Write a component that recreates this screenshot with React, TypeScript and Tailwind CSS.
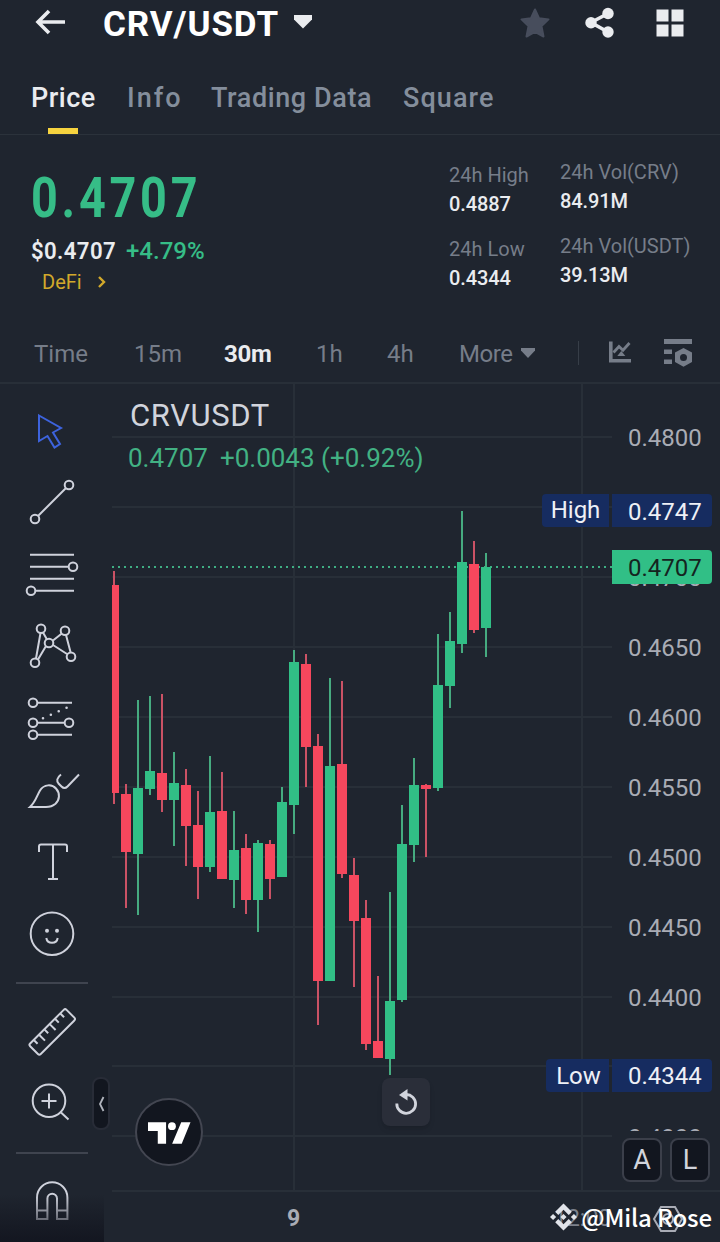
import type { ReactNode } from "react";

type Candle = [high: number, low: number, top: number, bottom: number, up: boolean];

const CANDLES: Candle[] = [
  [571, 804, 585, 793, false],
  [784, 908, 794, 852, false],
  [700, 915, 788, 854, true],
  [696, 795, 771, 789, true],
  [694, 812, 773, 800, false],
  [752, 846, 783, 800, true],
  [769, 866, 785, 826, false],
  [791, 899, 825, 867, false],
  [756, 872, 812, 867, true],
  [772, 879, 811, 879, false],
  [811, 908, 850, 880, true],
  [834, 914, 848, 900, false],
  [840, 932, 843, 900, true],
  [840, 899, 844, 879, false],
  [787, 877, 802, 877, true],
  [650, 834, 662, 805, true],
  [654, 787, 664, 747, false],
  [734, 1025, 746, 981, false],
  [678, 981, 766, 981, true],
  [681, 878, 764, 874, false],
  [858, 987, 875, 921, false],
  [900, 1050, 918, 1044, false],
  [976, 1058, 1041, 1058, false],
  [892, 1075, 1001, 1059, true],
  [805, 1002, 844, 1000, true],
  [758, 862, 785, 845, true],
  [784, 857, 785, 789, false],
  [634, 791, 685, 788, true],
  [612, 708, 641, 686, true],
  [511, 653, 562, 644, true],
  [541, 633, 564, 630, false],
  [553, 657, 567, 628, true],
];

const GRID_Y = [437, 507, 577, 647, 717, 787, 857, 927, 997, 1066, 1136];

// empty steps are the ones fully hidden behind the high / low tags
const AXIS = ["0.4800", "", "0.4700", "0.4650", "0.4600", "0.4550", "0.4500", "0.4450", "0.4400", "", "0.4300"];

function Header() {
  return (
    <header className="flex h-[46px] items-center pr-9 pl-[35px] text-[#eaecef]">
      <svg className="-mt-0.5" width="30" height="26" viewBox="0 0 30 26" fill="none" stroke="currentColor" strokeWidth="3.6">
        <path d="M30 13H3M14 2 3 13l11 11" />
      </svg>
      <h1 className="ml-[38px] w-[190px] pt-[3px] text-[35px] leading-[46px] font-bold tracking-[0.9px] whitespace-nowrap text-white">
        CRV/USDT
      </h1>
      <svg className="-mt-1" width="20" height="16" viewBox="0 0 20 16" fill="currentColor">
        <path d="M1 2h18v4.500L10 15.500 1 6.500z" />
      </svg>
      <div className="-mt-px ml-auto flex items-center">
        <svg width="32" height="32" viewBox="0 0 32 32" fill="#474d5c" stroke="#474d5c" strokeWidth="2" strokeLinejoin="round">
          <path d="m16 2.500 4.100 8.800 9.400 1.100-7 6.700 2 10.400L16 24.800l-8.500 4.700 2-10.400-7-6.700 9.400-1.100z" />
        </svg>
        <svg className="ml-[33px]" width="32" height="32" viewBox="0 0 32 32" fill="currentColor">
          <path d="M24 6.500 7 15.500l17 9.500" fill="none" stroke="currentColor" strokeWidth="3.600" />
          <circle cx="24" cy="6.500" r="5.700" />
          <circle cx="7" cy="15.700" r="5.700" />
          <circle cx="24" cy="25" r="5.700" />
        </svg>
        <svg className="ml-10" width="28" height="28" viewBox="0 0 28 28" fill="currentColor">
          <path d="M.5.500h12v12H.5zM15.500.500h12v12h-12zM.5 15.500h12v12H.5zM15.500 15.500h12v12h-12z" />
        </svg>
      </div>
    </header>
  );
}

function Tabs() {
  return (
    <nav className="flex h-[89px] border-b border-[#2b323b] pl-[31px] text-[27px] leading-[105px] font-medium whitespace-nowrap text-[#848e9c]">
      <div className="relative w-24 tracking-[0.500px] text-[#eaecef]">
        Price
        <span className="absolute bottom-0 left-[17px] h-1.5 w-[30px] bg-[#f6d33f]" />
      </div>
      <div className="w-[84px] tracking-[2px]">Info</div>
      <div className="w-48 tracking-[0.600px]">Trading Data</div>
      <div className="tracking-[1.100px]">Square</div>
    </nav>
  );
}

function Stat({ label, value }: { label: string; value: string }) {
  return (
    <div className="h-[74px] text-[20px] leading-[29px] whitespace-nowrap">
      <div className="text-[#767d89]">{label}</div>
      <div className="font-medium tracking-[-0.100px] text-[#eaecef]">{value}</div>
    </div>
  );
}

function PriceSummary() {
  return (
    <section className="flex h-[188px]">
      <div className="w-[449px] pt-[35px] pl-[31px]">
        <div className="h-14 w-fit origin-left scale-x-[0.835] text-[56px] leading-[56px] font-bold tracking-[4.500px] text-[#36bd87]">
          0.4707
        </div>
        <div className="mt-2.5 flex h-[30px] text-[24px] leading-[30px] whitespace-nowrap">
          <span className="w-[95px] origin-left">
            <span className="block w-fit origin-left scale-x-[0.925] font-semibold tracking-[0.400px] text-[#eaecef]">
              $0.4707
            </span>
          </span>
          <span className="font-medium text-[#36bd87]">+4.79%</span>
        </div>
        <div className="mt-1 flex h-6 items-center pl-[11px] text-[20px] leading-6 text-[#d2a92b]">
          DeFi
          <svg className="ml-[15px]" width="10" height="12" viewBox="0 0 10 12" fill="none" stroke="currentColor" strokeWidth="2.400">
            <path d="m2 1 5 5-5 5" />
          </svg>
        </div>
      </div>
      <div className="w-[111px] pt-[26px]">
        <Stat label="24h High" value="0.4887" />
        <Stat label="24h Low" value="0.4344" />
      </div>
      <div className="pt-[23px]">
        <Stat label="24h Vol(CRV)" value="84.91M" />
        <Stat label="24h Vol(USDT)" value="39.13M" />
      </div>
    </section>
  );
}

function Intervals() {
  return (
    <div className="flex h-[61px] items-center border-b-2 border-[#282f38] pl-[34px] text-[24px] whitespace-nowrap text-[#767d89]">
      <div className="w-[100px] pt-0.5">Time</div>
      <div className="w-[90px] pt-0.5">15m</div>
      <div className="w-[92px] pt-0.5 font-bold tracking-[-0.300px] text-[#eaecef]">30m</div>
      <div className="w-[71px] pt-0.5">1h</div>
      <div className="w-[72px] pt-0.5">4h</div>
      <div className="w-[62px] pt-0.5 tracking-[-0.400px]">More</div>
      <svg width="14" height="10" viewBox="0 0 14 10" fill="currentColor">
        <path d="M0 0h14v2.500L7 10 0 2.500z" />
      </svg>
      <div className="ml-[43px] h-6 w-px bg-[#373e48]" />
      <svg className="-mt-0.5 ml-[29px]" width="24" height="24" viewBox="0 0 24 24" fill="none" stroke="currentColor">
        <path d="M2.800 1.500v19.300H23" strokeWidth="3.600" />
        <path d="m5.500 12.500 5.500-6 4 3.700L21.500 3" strokeWidth="2.800" />
        <path d="m13.300 11 4 5h-8z" fill="currentColor" stroke="none" />
      </svg>
      <svg className="-mt-0.5 ml-8" width="28" height="30" viewBox="0 0 28 30" fill="currentColor">
        <path d="M0 2h28v5H0zM0 12.500h8v4.500H0zM0 22.500h8V27H0z" />
        <path d="M19.500 11 28 15.500v9.500l-8.500 4.700L11 25v-9.500zm0 6a3.500 3.500 0 1 0 0 7 3.500 3.500 0 0 0 0-7" fillRule="evenodd" />
      </svg>
    </div>
  );
}

function Tool({ children, color = "#cfd2dc" }: { children: ReactNode; color?: string }) {
  return (
    <svg className="block shrink-0" width="104" height="72" viewBox="0 0 104 72" fill="none" stroke={color} strokeWidth="2">
      {children}
    </svg>
  );
}

function Toolbar() {
  return (
    <aside className="relative flex w-[104px] flex-col pt-3">
      <Tool color="#3d63dd">
        <path d="M39 19.500 61 32l-8 4.500 7 11.500-5.500 3.500-7-11.500L39 45z" />
      </Tool>
      <Tool>
        <path d="M38 48 66 20" />
        <circle cx="69" cy="17" r="4.300" />
        <circle cx="35" cy="51" r="4.300" />
      </Tool>
      <Tool>
        <path d="M30 14.700h44M30 26.700h38.500M30 38.700h44M35.500 50.700H74" />
        <circle cx="73" cy="26.700" r="4.300" />
        <circle cx="31" cy="50.700" r="4.300" />
      </Tool>
      <Tool>
        <path d="M40.500 21 36 46.500M43 20.500l4 7M53 28.500l8.500-6.700M66 23l4.500 17M53 33l14 9M46 34 38 47.500" />
        <circle cx="41" cy="16.700" r="4.300" />
        <circle cx="65" cy="18.700" r="4.300" />
        <circle cx="49" cy="31" r="4.300" />
        <circle cx="71" cy="44.700" r="4.300" />
        <circle cx="35" cy="50.700" r="4.300" />
      </Tool>
      <Tool>
        <path d="M37.500 18.700H72M37.500 38.700h27M37.500 50.700H72" />
        <path d="m43 34.300 27-12" strokeWidth="2.600" strokeDasharray="0 8.600" strokeLinecap="round" />
        <circle cx="33" cy="18.700" r="4.300" />
        <circle cx="33" cy="38.700" r="4.300" />
        <circle cx="69" cy="38.700" r="4.300" />
        <circle cx="33" cy="50.700" r="4.300" />
      </Tool>
      <Tool>
        <path d="M30 51c5.500-5 6.500-10.500 10-16.500 4-6.500 12-6.500 16-2 4.500 5 3.500 11.500-.5 15.200C52.500 50.300 50 51 46 51z" />
        <path d="M61 18.500c-4.500 3.500-4.500 6.500-2.500 9l3 3c1.800 1.800 4.200 1.800 6 0L79 18.500" />
      </Tool>
      <Tool>
        <path d="M39 24v-5.500c0-1.300.700-2 2-2h24c1.300 0 2 .700 2 2V24M53 16.500V51M48 51h10" />
      </Tool>
      <Tool>
        <circle cx="52" cy="33.700" r="21.300" />
        <circle cx="47" cy="30.700" r="2" fill="#cfd2dc" stroke="none" />
        <circle cx="57" cy="30.700" r="2" fill="#cfd2dc" stroke="none" />
        <path d="M46.300 38c1 6.300 10.400 6.300 11.400 0" />
      </Tool>
      <div className="mt-2.5 ml-4 h-0.5 w-[72px] bg-[#3f444f]" />
      <div className="mt-[11px]">
        <Tool>
          <g transform="rotate(-45 52.200 37)">
            <rect x="26.500" y="29.500" width="51.500" height="15" rx="2" />
            <path d="M33.500 30v5M41 30v8M48.500 30v5M56 30v8M63.500 30v5M71 30v5" />
          </g>
        </Tool>
        <Tool>
          <circle cx="49" cy="33.700" r="16.300" />
          <path d="m61 45.500 7.500 7M49 26.500v15M41.500 34h15" />
        </Tool>
      </div>
      <div className="mt-[13px] ml-4 h-0.5 w-[72px] bg-[#3f444f]" />
      <div className="mt-[11px]">
        <Tool>
          <path d="M37 54V32.500a15.200 15.200 0 0 1 30.400 0V54H57V33.500a4.800 4.800 0 0 0-9.600 0V54zM37 45.500h10.400M57 45.500h10.400" />
        </Tool>
      </div>
      <div className="absolute inset-x-0 bottom-0 h-12 bg-linear-to-b from-transparent to-[#131620]" />
    </aside>
  );
}

function CandleChart() {
  return (
    <svg className="block" width="616" height="858" viewBox="104 384 616 858">
      <g stroke="#282f38" strokeWidth="2">
        {GRID_Y.map((y) => (
          <path key={y} d={`M112 ${y}H612`} />
        ))}
        <path d="M112 1191H720M294 384v807M582 384v807" />
      </g>
      <path d="M112 567H612" stroke="#3fae83" strokeWidth="2" strokeDasharray="2 4" />
      {CANDLES.map(([high, low, top, bottom, up], i) => {
        const x = 114 + i * 12;
        // the oldest candle is cut off by the pane's left edge
        const left = Math.max(x - 5, 112);
        return (
          <g key={x}>
            <rect x={x - 1} y={high} width="2" height={low - high} fill={up ? "#46ab80" : "#ca5265"} />
            <rect x={left} y={top} width={x + 5 - left} height={bottom - top} fill={up ? "#31bf86" : "#f6475d"} />
          </g>
        );
      })}
    </svg>
  );
}

function ChartPane() {
  return (
    <main className="relative w-[616px] font-normal">
      <CandleChart />

      {/* Price axis */}
      <div className="absolute top-[18px] right-0 h-[729px] w-[108px] overflow-hidden pl-4 text-[24px] text-[#a9acb5]">
        {AXIS.map((p, i) => (
          <div key={i} className="h-[70px] leading-[73px]">
            {p}
          </div>
        ))}
      </div>

      {/* Legend */}
      <div className="absolute top-3 left-[26px] leading-10 whitespace-nowrap">
        <div className="text-[31px] tracking-[0.600px] text-[#d1d4dc]">CRVUSDT</div>
        <div className="-ml-0.5 flex gap-3 pt-0.5 text-[26px] text-[#42b183]">
          <span>0.4707</span>
          <span>+0.0043 (+0.92%)</span>
        </div>
      </div>

      {/* Price tags */}
      <div className="absolute top-[110px] right-2 flex h-[33px] gap-[3px] text-[24px] leading-9 text-[#eef0f6]">
        <span className="w-[67px] rounded-l bg-[#162c60] text-center leading-[33px]">High</span>
        <span className="w-[100px] rounded-r bg-[#162c60] pl-4">0.4747</span>
      </div>
      <div className="absolute top-[166px] right-2 h-[34px] w-[100px] rounded-r bg-[#31bf86] pl-4 text-[24px] leading-9 text-[#15241f]">
        0.4707
      </div>
      <div className="absolute top-[675px] right-2 flex h-[33px] gap-[3px] text-[24px] leading-[34px] text-[#eef0f6]">
        <span className="w-[63px] rounded-l bg-[#162c60] pl-0.5 text-center">Low</span>
        <span className="w-[100px] rounded-r bg-[#162c60] pl-4">0.4344</span>
      </div>

      {/* Toolbar collapse handle */}
      <div className="absolute top-[693px] left-[-12px] flex h-[53px] w-[18px] items-center justify-center rounded-lg border-2 border-[#282c37] bg-[#12161f]">
        <svg className="shrink-0" width="7" height="16" viewBox="0 0 7 16" fill="none" stroke="#b2b5be" strokeWidth="1.800">
          <path d="M5.500 1 2 8l3.500 7" />
        </svg>
      </div>

      <div className="absolute top-[714px] left-[31px] flex size-17 items-center justify-center rounded-full border-2 border-[#434651] bg-[#12161f]">
        <svg className="mt-0.5 ml-px" width="43" height="22" viewBox="0 0 44 22" fill="#fff">
          <path d="M0 0h18.500v22h-8.500V9H0zM34 0h9.500L34.500 22H24.700z" />
          <circle cx="24.500" cy="4" r="4" />
        </svg>
      </div>

      <div className="absolute top-[694px] left-[278px] flex size-12 items-center justify-center rounded-lg bg-[#2a2e39] shadow-md">
        <svg width="24" height="26" viewBox="0 0 24 26" fill="none" stroke="#d1d4dc" strokeWidth="2.800">
          <path d="M2.800 14.500A9.400 9.400 0 1 0 12 5.500H9.500" />
          <path d="m5 6 8.500-6v11.500z" fill="#d1d4dc" stroke="none" />
        </svg>
      </div>

      {/* Scale buttons */}
      <div className="absolute top-[754px] right-2.5 flex gap-2 text-[27px] leading-[41px] text-[#d1d4dc]">
        <span className="h-11 w-10 rounded-lg border-2 border-[#3b3f4a] bg-[#12161f] text-center">A</span>
        <span className="h-11 w-10 rounded-lg border-2 border-[#3b3f4a] bg-[#12161f] text-center">L</span>
      </div>

      {/* Time axis */}
      <span className="absolute top-[821px] left-[183px] text-[23px] leading-7 font-bold text-[#a9acb5]">9</span>
      <span className="absolute top-[821px] left-[450px] text-[23px] leading-7 text-[#7d818b]">12:00</span>
      <svg className="absolute top-[820px] left-[548px]" width="32" height="30" viewBox="0 0 32 30" fill="none" stroke="#a9acb5" strokeWidth="2">
        <path d="M9 3h14l7 12-7 12H9L2 15z" />
        <circle cx="16" cy="15" r="5" />
      </svg>

      {/* Author stamp */}
      <div className="absolute top-[815px] right-2 flex items-center gap-1 text-white">
        <svg width="27" height="28" viewBox="0 0 28 28" fill="#e1e4ea">
          <path d="m14 0 8.600 8.600-3.200 3.200L14 6.400l-5.400 5.400-3.200-3.200zM14 28l-8.600-8.600 3.200-3.200 5.400 5.400 5.400-5.400 3.200 3.200zM3.200 10.800 6.400 14l-3.200 3.200L0 14zM24.800 10.800 28 14l-3.200 3.200-3.200-3.200zM14 10.800l3.200 3.200-3.200 3.200-3.200-3.200z" />
        </svg>
        <span className="font-['Noto_Sans_CJK_SC',sans-serif] text-[24px] leading-9 font-medium tracking-[-0.100px] whitespace-nowrap">
          @Mila Rose
        </span>
      </div>
    </main>
  );
}

export default function App() {
  return (
    <div className="h-[1242px] w-[720px] overflow-hidden bg-[#1f252f] font-['Roboto',sans-serif]">
      <Header />
      <Tabs />
      <PriceSummary />
      <Intervals />
      <div className="flex h-[858px]">
        <Toolbar />
        <ChartPane />
      </div>
    </div>
  );
}
